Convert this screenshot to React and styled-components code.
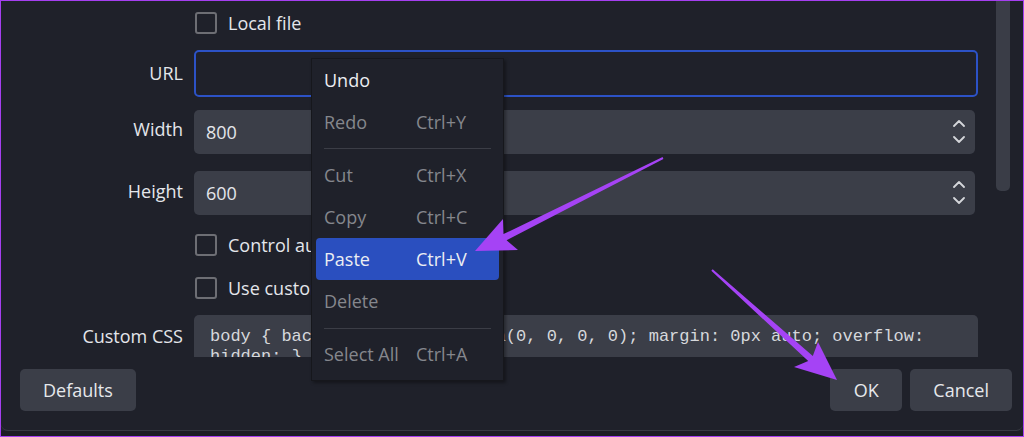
import React from "react";
import styled, { createGlobalStyle } from "styled-components";

const GlobalStyle = createGlobalStyle`
  * { box-sizing: border-box; }
  body {
    margin: 0;
    background: #1f212a;
    font-family: "Open Sans", "Noto Sans", sans-serif;
  }
`;

const Frame = styled.div`
  width: 1024px;
  height: 437px;
  border: 1px solid #a53ff0;
  background: #1f212a;
  position: relative;
  overflow: hidden;
  display: flex;
  flex-direction: column;
  color: #e4e6eb;
  font-size: 18px;
`;

const Dialog = styled.div`
  display: flex;
  flex-direction: column;
  border-bottom: 1px solid #383a42;
  border-radius: 0 0 7px 7px;
`;

const ScrollArea = styled.div`
  height: 356px;
  overflow: hidden;
  display: flex;
`;

const Form = styled.div`
  width: 977px;
  display: flex;
  flex-direction: column;
`;

const Row = styled.div`
  display: grid;
  grid-template-columns: 182px 784px;
  column-gap: 11px;
  align-items: ${(p) => (p.top ? "start" : "center")};
  height: ${(p) => p.h}px;
  margin-top: ${(p) => p.mt}px;
  flex-shrink: 0;
`;

const Label = styled.div`
  text-align: right;
  line-height: 24px;
  padding-top: ${(p) => p.pt || 0}px;
  margin-top: ${(p) => p.lift || 0}px;
`;

const CheckRow = styled.label`
  display: flex;
  align-items: center;
  gap: 11px;
  margin-left: 1px;
  white-space: nowrap;
`;

const Box = styled.span`
  width: 22px;
  height: 22px;
  border: 2px solid #6d6e74;
  border-radius: 3px;
  flex-shrink: 0;
`;

const UrlInput = styled.div`
  height: 47px;
  border: 2px solid #2c52c6;
  border-radius: 5px;
  background: #1f212a;
`;

const SpinInput = styled.div`
  height: 44px;
  border-radius: 5px;
  background: #3b3e48;
  display: flex;
  align-items: center;
  justify-content: space-between;
  padding: 0 10px 0 12px;
  line-height: 24px;
  width: 781px;
  span {
    margin-top: 0;
  }
`;

const Spin = styled.div`
  display: flex;
  flex-direction: column;
  gap: 9px;
  margin-top: -1px;
  svg {
    display: block;
  }
`;

const CodeBox = styled.div`
  height: 70px;
  border-radius: 5px;
  background: #3b3e48;
  padding: 12px 16px 0;
  font-family: "Liberation Mono", "DejaVu Sans Mono", monospace;
  font-size: 17px;
  line-height: 20px;
  color: #d6d8dc;
  white-space: pre-wrap;
`;

const Scrollbar = styled.div`
  width: 14px;
  margin-left: 18px;
`;

const Thumb = styled.div`
  height: 190px;
  background: #3a3d47;
  border-radius: 0 0 5px 5px;
`;

const Footer = styled.div`
  height: 73px;
  display: flex;
  align-items: flex-start;
  padding: 12px 11px 0 19px;
  gap: 8px;
`;

const Spacer = styled.div`
  flex: 1;
`;

const Button = styled.button`
  height: 42px;
  min-width: 72px;
  padding: 0 23px;
  border: none;
  border-radius: 5px;
  background: #3b3e48;
  color: #e6e8ec;
  font-family: inherit;
  font-size: 18px;
  line-height: 24px;
`;

const Strip = styled.div`
  flex: 1;
  background: #1c1d23;
`;

const Menu = styled.div`
  position: absolute;
  left: 310px;
  top: 57px;
  width: 193px;
  height: 323px;
  background: #1f212a;
  border: 1px solid #16171c;
  box-shadow: 2px 2px 3px rgba(0, 0, 0, 0.35);
  padding: 0 4px 4px;
  display: flex;
  flex-direction: column;
`;

const Item = styled.div`
  height: 42px;
  display: grid;
  grid-template-columns: 92px auto;
  align-items: center;
  padding-left: 8px;
  border-radius: 4px;
  color: ${(p) => (p.enabled || p.active ? "#eceef2" : "#85878d")};
  background: ${(p) => (p.active ? "#2a4fbf" : "transparent")};
  line-height: 24px;
`;

const Separator = styled.div`
  height: 11px;
  display: flex;
  align-items: center;
  padding: 0 8px;
  &::after {
    content: "";
    flex: 1;
    height: 1px;
    background: #3b3d46;
    margin-top: ${(p) => p.offset || 0}px;
  }
`;

const Overlay = styled.svg`
  position: absolute;
  left: -1px;
  top: -1px;
  pointer-events: none;
`;

const Chevron = ({ up }) => (
  <svg width="12" height="8" viewBox="0 0 12 8">
    <path
      d={up ? "M1 7 L6 2 L11 7" : "M1 1 L6 6 L11 1"}
      fill="none"
      stroke="#d4d6da"
      strokeWidth="1.8"
      strokeLinecap="round"
      strokeLinejoin="round"
    />
  </svg>
);

const Checkbox = ({ children }) => (
  <CheckRow>
    <Box />
    <span>{children}</span>
  </CheckRow>
);

const menuItems = [
  { label: "Undo", enabled: true },
  { label: "Redo", key: "Ctrl+Y" },
  { sep: true, offset: -1 },
  { label: "Cut", key: "Ctrl+X" },
  { label: "Copy", key: "Ctrl+C" },
  { label: "Paste", key: "Ctrl+V", active: true },
  { label: "Delete" },
  { sep: true, offset: 1 },
  { label: "Select All", key: "Ctrl+A" },
];

const App = () => {
  return (
    <>
      <GlobalStyle />
      <Frame>
        <Dialog>
          <ScrollArea>
            <Form>
              <Row h={38} mt={3}>
                <span />
                <Checkbox>Local file</Checkbox>
              </Row>
              <Row h={47} mt={8}>
                <Label lift={-2}>URL</Label>
                <UrlInput />
              </Row>
              <Row h={44} mt={13}>
                <Label lift={-7}>Width</Label>
                <SpinInput>
                  <span>800</span>
                  <Spin>
                    <Chevron up />
                    <Chevron />
                  </Spin>
                </SpinInput>
              </Row>
              <Row h={44} mt={17}>
                <Label lift={-5}>Height</Label>
                <SpinInput>
                  <span>600</span>
                  <Spin>
                    <Chevron up />
                    <Chevron />
                  </Spin>
                </SpinInput>
              </Row>
              <Row h={42} mt={9}>
                <span />
                <Checkbox>Control audio via OBS</Checkbox>
              </Row>
              <Row h={42} mt={1}>
                <span />
                <Checkbox>Use custom frame rate</Checkbox>
              </Row>
              <Row h={70} mt={6} top>
                <Label pt={9}>Custom CSS</Label>
                <CodeBox>
                  body {"{"} background-color: rgba(0, 0, 0, 0); margin: 0px auto; overflow: hidden; {"}"}
                </CodeBox>
              </Row>
            </Form>
            <Scrollbar>
              <Thumb />
            </Scrollbar>
          </ScrollArea>
          <Footer>
            <Button>Defaults</Button>
            <Spacer />
            <Button>OK</Button>
            <Button>Cancel</Button>
          </Footer>
        </Dialog>
        <Strip />

        <Menu>
          {menuItems.map((m, i) =>
            m.sep ? (
              <Separator key={i} offset={m.offset} />
            ) : (
              <Item key={i} enabled={m.enabled} active={m.active}>
                <span>{m.label}</span>
                <span>{m.key}</span>
              </Item>
            )
          )}
        </Menu>

        <Overlay width="1024" height="437" viewBox="0 0 1024 437">
          <polygon
            fill="#a543f5"
            points="662.6,157.1 663.4,158.9 506.6,240.3 518,250 475,251 503,219 503.5,234.1"
          />
          <polygon
            fill="#a543f5"
            points="711.3,270.8 712.7,269.2 812.8,355.9 818,342 837,380 794,367 808.2,361.1"
          />
        </Overlay>
      </Frame>
    </>
  );
};

export default App;
